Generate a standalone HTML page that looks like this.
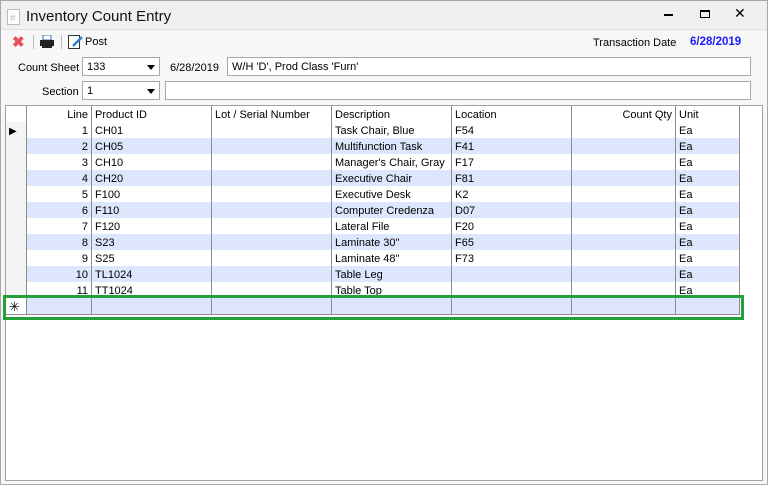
<!DOCTYPE html>
<html><head><style>
*{box-sizing:border-box;margin:0;padding:0}
body{width:768px;height:485px;background:#f0f0f0;font-family:"Liberation Sans",Arial,sans-serif;font-size:11px;color:#000;position:relative;overflow:hidden}
.win{position:absolute;left:0;top:0;width:768px;height:485px;background:#f7f7f7}
.bord{position:absolute;left:0;top:0;width:768px;height:485px;border:1px solid #a8a8a8;pointer-events:none}
.title{position:absolute;left:0;top:0;width:768px;height:30px;background:#f0f0f0}
.a{position:absolute;white-space:nowrap}
.inp{position:absolute;background:#fff;border:1px solid #a8a8a8;height:19px;padding:3px 4px}
.dd{position:absolute;width:0;height:0;border-left:4px solid transparent;border-right:4px solid transparent;border-top:5px solid #000}
.grid{position:absolute;left:5px;top:105px;width:758px;height:376px;background:#fff;border:1px solid #a0a0a0}
.c{position:absolute;border-right:1px solid #8c8c8c;border-bottom:1px solid #8c8c8c;height:17px;padding:2px 3px 0;overflow:hidden;line-height:14px}
</style></head><body>
<div class="win">
<div class="title"></div>
<svg class="a" style="left:7px;top:9px" width="13" height="16"><rect x="0.5" y="0.5" width="12" height="15" fill="#fff" stroke="#bbb"/><text x="3" y="12" font-size="10" fill="#bbb" font-family="Liberation Sans">#</text></svg>
<div class="a" style="left:26px;top:8px;font-size:15px;color:#111">Inventory Count Entry</div>
<div class="a" style="left:664px;top:14px;width:9px;height:2px;background:#000"></div>
<div class="a" style="left:700px;top:10px;width:10px;height:8px;border:1px solid #000;border-top-width:2px"></div>
<div class="a" style="left:734px;top:5px;font-size:14px">✕</div>
<div class="a" style="left:0;top:29px;width:768px;height:1px;background:#e0e0e0"></div>
<div class="a" style="left:12px;top:33px;font-size:15px;color:#e8505a;font-weight:bold">✖</div>
<div class="a" style="left:33px;top:35px;width:1px;height:14px;background:#bbb"></div>
<svg class="a" style="left:40px;top:35px" width="14" height="14"><rect x="3" y="0" width="8" height="5" fill="#fff" stroke="#3a6fb0"/><rect x="0" y="5" width="14" height="6" fill="#222"/><rect x="2" y="11" width="10" height="2" fill="#222"/></svg>
<div class="a" style="left:61px;top:35px;width:1px;height:14px;background:#bbb"></div>
<svg class="a" style="left:68px;top:34px" width="16" height="16"><rect x="0.5" y="1.5" width="11" height="13" fill="#fff" stroke="#333"/><path d="M5 12 L14 3" stroke="#2f7fd0" stroke-width="2.5"/></svg>
<div class="a" style="left:85px;top:36px">Post</div>
<div class="a" style="left:593px;top:37px">Transaction Date</div>
<div class="a" style="left:690px;top:36px;color:#1a1aff;font-weight:bold;font-size:11.5px">6/28/2019</div>
<div class="a" style="left:18px;top:62px">Count Sheet</div>
<div class="inp" style="left:82px;top:57px;width:78px">133</div>
<div class="dd" style="left:147px;top:65px"></div>
<div class="a" style="left:170px;top:62px">6/28/2019</div>
<div class="inp" style="left:227px;top:57px;width:524px">W/H 'D', Prod Class 'Furn'</div>
<div class="a" style="left:42px;top:86px">Section</div>
<div class="inp" style="left:82px;top:81px;width:78px">1</div>
<div class="dd" style="left:147px;top:89px"></div>
<div class="inp" style="left:165px;top:81px;width:586px"></div>
<div class="grid" id="g"></div>
</div>
<div class="bord"></div>
<div class="a" style="left:3px;top:295px;width:741px;height:25px;border:3px solid #22a03a"></div>
<script>
var cols=[[0,21],[21,65],[86,120],[206,120],[326,120],[446,120],[566,104],[670,64]];
var hdr=["","Line","Product ID","Lot / Serial Number","Description","Location","Count Qty","Unit"];
var rows=[["1","CH01","Task Chair, Blue","F54"],["2","CH05","Multifunction Task","F41"],["3","CH10","Manager's Chair, Gray","F17"],["4","CH20","Executive Chair","F81"],["5","F100","Executive Desk","K2"],["6","F110","Computer Credenza","D07"],["7","F120","Lateral File","F20"],["8","S23","Laminate 30\"","F65"],["9","S25","Laminate 48\"","F73"],["10","TL1024","Table Leg",""],["11","TT1024","Table Top",""]];
var g=document.getElementById('g'),h='';
function cell(i,top,txt,bg,ht){var c=cols[i];var al=(i==1||i==6)?'text-align:right;':'';h+='<div class="c" style="left:'+c[0]+'px;top:'+top+'px;width:'+c[1]+'px;height:'+(ht||17)+'px;background:'+bg+';'+al+'">'+txt+'</div>';}
for(var i=0;i<8;i++)cell(i,0,hdr[i],'#fff');
rows.forEach(function(r,k){var t=16+k*16;var bg=k%2?'#dde6fc':'#fff';
cell(0,t,k==0?'<span style="font-size:10px">▶</span>':'','#f4f4f4');
cell(1,t,r[0],bg);cell(2,t,r[1],bg);cell(3,t,'',bg);cell(4,t,r[2],bg);cell(5,t,r[3],bg);cell(6,t,'',bg);cell(7,t,'Ea',bg);});
var t=192;cell(0,t,'<span style="font-size:13px">✳</span>','#fff');for(var i=1;i<8;i++)cell(i,t,'','#dde6fc');
g.innerHTML=h;
</script>
</body></html>
